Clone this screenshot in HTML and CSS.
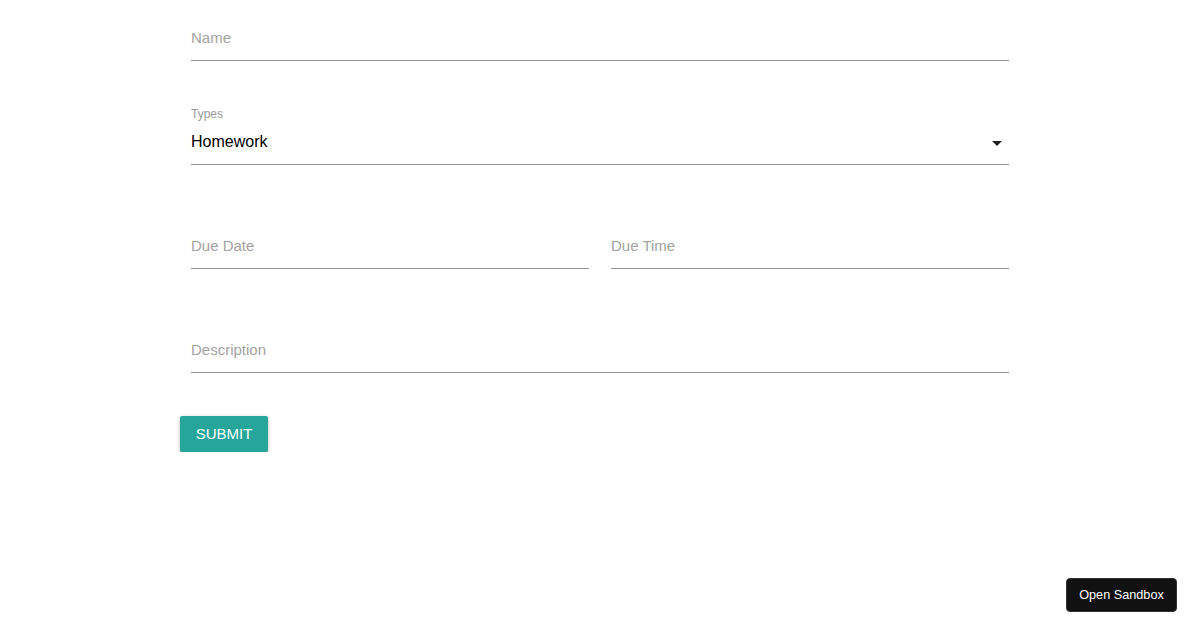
FILE: index.html
```html
<!DOCTYPE html>
<html>
<head>
<meta charset="utf-8">
<link rel="stylesheet" href="styles.css">
</head>
<body>
<form class="form">
  <div class="row">
    <div class="field">
      <div class="label"></div>
      <div class="input placeholder">Name</div>
    </div>
  </div>
  <div class="row">
    <div class="field">
      <div class="label">Types</div>
      <div class="input select">
        <span>Homework</span>
        <svg class="arrow" viewBox="0 0 24 24" width="24" height="24"><path d="M7 10l5 5 5-5z" fill="#000" fill-opacity="0.87"/></svg>
      </div>
    </div>
  </div>
  <div class="row split">
    <div class="field">
      <div class="label"></div>
      <div class="input placeholder">Due Date</div>
    </div>
    <div class="field">
      <div class="label"></div>
      <div class="input placeholder">Due Time</div>
    </div>
  </div>
  <div class="row">
    <div class="field">
      <div class="label"></div>
      <div class="input placeholder">Description</div>
    </div>
  </div>
  <button type="button" class="submit">SUBMIT</button>
</form>
<div class="sandbox">Open Sandbox</div>
</body>
</html>
```
FILE: styles.css
```css
html, body {
  margin: 0;
  padding: 0;
  background: #fff;
  font-family: "Liberation Sans", Arial, sans-serif;
}
.form {
  width: 840px;
  margin-left: 180px;
  display: flex;
  flex-direction: column;
  align-items: flex-start;
}
.row {
  width: 818px;
  padding: 0 11px;
  margin-bottom: 43px;
  display: grid;
  grid-template-columns: 1fr;
}
.row.split {
  grid-template-columns: 1fr 1fr;
  column-gap: 22px;
}
.field {
  border-bottom: 1px solid #949494;
  padding-top: 3px;
  height: 57px;
  display: flex;
  flex-direction: column;
}
.label {
  height: 14px;
  font-size: 12px;
  line-height: 14px;
  color: #9a9a9a;
}
.input {
  margin-top: 11px;
  height: 19px;
  font-size: 16px;
  line-height: 19px;
  color: #000;
}
.placeholder {
  color: #a2a2a2;
  font-size: 15px;
}
.select {
  display: flex;
  align-items: center;
  justify-content: space-between;
}
.arrow {
  margin-top: 2px;
}
.submit {
  width: 88px;
  height: 36px;
  border: none;
  border-radius: 2px;
  background: #26a69a;
  color: #fff;
  font-family: "Liberation Sans", Arial, sans-serif;
  font-size: 15px;
  letter-spacing: 0;
  padding: 0 0 1px;
  box-shadow: 0 1px 5px rgba(0,0,0,0.2), 0 2px 2px rgba(0,0,0,0.14), 0 3px 1px -2px rgba(0,0,0,0.12);
}
.sandbox {
  position: fixed;
  right: 23px;
  bottom: 18px;
  width: 111px;
  height: 34px;
  box-sizing: border-box;
  background: #111;
  border: 1px solid #333;
  border-radius: 4px;
  color: #fff;
  font-size: 12.7px;
  line-height: 32px;
  text-align: center;
}
```
